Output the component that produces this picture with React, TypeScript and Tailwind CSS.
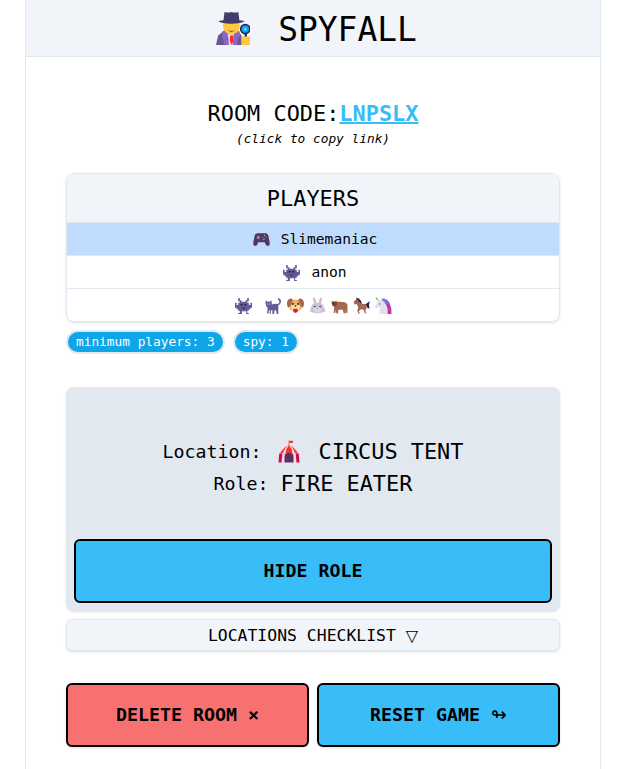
const mono = "font-['DejaVu_Sans_Mono',monospace]";

function SpyIcon({ className }: { className?: string }) {
  return (
    <svg viewBox="0 0 32 32" className={className}>
      <path d="M0 32l2-9 6-5 6 3 6-3 4 5v9z" fill="#635994" />
      <path d="M6 19l3-1 4 6-3 1 2 7H8l-2-8z" fill="#8d65c5" />
      <path d="M19 18l3 1 1 5-2 1-1 7h-4l1-8z" fill="#8d65c5" />
      <path d="M11 21h6l-1 11h-4z" fill="#e1d8ec" />
      <path d="M13.300 23h3l.4 5-1.900 4-1.900-4z" fill="#f8312f" />
      <circle cx="14.500" cy="14" r="8" fill="#ffc83d" />
      <path d="M11 18q3.500 1.500 7 0l-3.500 2z" fill="#bb1d80" />
      <path d="M2 9.500q12-3 25 0-3 2.500-12.500 2.500T2 9.500z" fill="#433b6b" />
      <path d="M7 9l1-8q3 1 6.500 0 3.500 1 6.500 0l1 8q-7.500 1.500-15 0z" fill="#433b6b" />
      <path d="M27 21h2v5h-2z" fill="#321b41" />
      <path d="M24.500 24h7.500v8h-7.500z" fill="#ffc83d" />
      <circle cx="27.500" cy="17" r="5" fill="#321b41" />
      <circle cx="27.500" cy="17" r="3.600" fill="#00a6ed" />
      <circle cx="27.500" cy="17" r="1.500" fill="#83cbff" />
    </svg>
  );
}

function ControllerIcon({ className }: { className?: string }) {
  return (
    <svg viewBox="0 0 32 32" className={className}>
      <path d="M8 4h16q4 0 5 5l2.500 13q.8 6-3.500 6-3 0-4.500-3.500L22 21H10l-1.500 3.500Q7 28 4 28q-4.300 0-3.500-6L3 9q1-5 5-5z" fill="#533566" />
      <circle cx="10" cy="12" r="3" fill="#998ea4" />
      <circle cx="19.500" cy="16" r="1.600" fill="#998ea4" />
      <circle cx="22" cy="8.500" r="1.300" fill="#f9c23c" />
      <circle cx="25.500" cy="12" r="1.300" fill="#f8312f" />
      <circle cx="18.500" cy="12" r="1.300" fill="#00a6ed" />
      <circle cx="22" cy="15" r="1.300" fill="#00d26a" />
    </svg>
  );
}

function InvaderIcon({ className }: { className?: string }) {
  return (
    <svg viewBox="0 0 32 32" className={className}>
      <path
        d="M6 2h3v4h3v3h8V6h3V2h3v6h-3v3h3v4h3v-4h3v9h-3v3h-3v3h-3v4h3v2h-5v-5h-8v5H6v-2h3v-4H6v-3H3v-3H0v-9h3v4h3v-4h3V8H6z"
        fill="#635994"
      />
      <path d="M11 13h3v3h-3zM18 13h3v3h-3z" fill="#1c1633" />
      <path d="M14 20h4v2h-4z" fill="#321b41" />
    </svg>
  );
}

function CatIcon({ className }: { className?: string }) {
  return (
    <svg viewBox="0 0 32 32" className={className}>
      <path d="M1 6l3 3h5l3-3 1 8q5-2 11-1 4-1 3-5-1-3-3-4l1-2q6 2 5 8-1 4-5 6v16h-3l-1-7h-3l-1 7h-3v-7h-3v7H9v-7H7v6H4l1-11q-4-3-4-8z" fill="#635994" />
      <circle cx="5" cy="13" r="1" fill="#fff" />
      <circle cx="9" cy="13" r="1" fill="#fff" />
    </svg>
  );
}

function DogIcon({ className }: { className?: string }) {
  return (
    <svg viewBox="0 0 32 32" className={className}>
      <path d="M5 8q11-7 22 0v15q-11 9-22 0z" fill="#f3ad61" />
      <path d="M8 3Q1 3 0 11q0 8 3 9 4-2 5-8 3-3 3-7z" fill="#a56953" />
      <path d="M24 3q7 0 8 8 0 8-3 9-4-2-5-8-3-3-3-7z" fill="#a56953" />
      <circle cx="11" cy="13" r="1.800" fill="#1c1c1c" />
      <circle cx="21" cy="13" r="1.800" fill="#1c1c1c" />
      <ellipse cx="16" cy="20" rx="8" ry="6" fill="#ffdea7" />
      <path d="M13.500 15.500h5L16 19z" fill="#321b41" />
      <path d="M12 22h8v5q-4 6-8 0z" fill="#e1163c" />
    </svg>
  );
}

function RabbitIcon({ className }: { className?: string }) {
  return (
    <svg viewBox="0 0 32 32" className={className}>
      <path d="M10 15L7 3q0-3 3-2 3 1 4 13zM22 15l3-12q0-3-3-2-3 1-4 13z" fill="#c9c3d0" />
      <path d="M11 12L9.500 4l2.500 8zM21 12l1.500-8L20 12z" fill="#f4a6b8" />
      <path d="M6 14q10-6 20 0l5 13q-15 7-30 0z" fill="#c9c3d0" />
      <ellipse cx="16" cy="24" rx="7" ry="5" fill="#dcd6e2" />
      <circle cx="11" cy="18" r="1.500" fill="#321b41" />
      <circle cx="21" cy="18" r="1.500" fill="#321b41" />
      <path d="M14.500 21h3L16 23z" fill="#f8312f" />
    </svg>
  );
}

function OxIcon({ className }: { className?: string }) {
  return (
    <svg viewBox="0 0 32 32" className={className}>
      <path d="M0 6q4 3 9 1l2-2-1 5H1z" fill="#f9c23c" />
      <path d="M2 9h8q13-1 18 2 4 2 3 8v11h-3v-6l-1 7h-3l-2-7h-8l-1 7H10l-1-7-1 6H5l1-12q-5 0-4-9z" fill="#a56953" />
      <path d="M1 9h10v6q-2 3-7 2-3-3-3-8z" fill="#7d4533" />
      <circle cx="5" cy="12" r="1" fill="#1c1c1c" />
    </svg>
  );
}

function HorseIcon({ className }: { className?: string }) {
  return (
    <svg viewBox="0 0 32 32" className={className}>
      <path d="M1 10l6-7 2 3 6 6q4 2 9 1l2 8-3 4 2 6-3-1-2-6-5-1-4 4 2 5-3-1-2-6 2-5-3-7-4 1z" fill="#a56953" />
      <path d="M5 1q6 1 10 6l2 6-4-2-4-5z" fill="#321b41" />
      <path d="M24 13l8-5-2 6 1 8-4-2-2-4z" fill="#321b41" />
      <circle cx="6" cy="8" r=".9" fill="#1c1c1c" />
    </svg>
  );
}

function UnicornIcon({ className }: { className?: string }) {
  return (
    <svg viewBox="0 0 32 32" className={className}>
      <path d="M1 0l8 7-3 3z" fill="#f9c23c" />
      <path d="M1 0l4 3.500L3 5z" fill="#00d26a" />
      <path d="M0 18l5-10q5-4 10-2l9 9 1 17H8l2-12-3-1-3 2q-4 0-4-3z" fill="#e6dff2" />
      <path d="M12 3q11-1 16 9 4 9 3 20h-7q1-11-3-17-4-6-9-12z" fill="#8d65c5" />
      <path d="M19 8q6 3 9 11 2 6 2 13h-6q1-11-2-16z" fill="#f70a8d" opacity=".7" />
      <path d="M14 6q6 2 9 8" stroke="#5092ff" strokeWidth="2.500" fill="none" />
      <circle cx="9" cy="13" r="1.100" fill="#1c1c1c" />
    </svg>
  );
}

function TentIcon({ className }: { className?: string }) {
  return (
    <svg viewBox="0 0 32 32" className={className}>
      <path d="M16 1v7" stroke="#d3883e" strokeWidth="1.500" />
      <path d="M16.500 1H22l-1.500 1.500L22 4h-5.500z" fill="#f8312f" />
      <path d="M16 7q8 3 12 11H4Q8 10 16 7z" fill="#f8312f" />
      <path d="M16 7q-6 3-8 11h3q1-7 5-11zM16 7q6 3 8 11h-3q-1-7-5-11z" fill="#ffdfe8" />
      <path d="M4 18h24l2 11q0 1-1 1H3q-1 0-1-1z" fill="#ffd7e0" />
      <path d="M3 18h4l-1 12H2zM25 18h4l1 12h-4z" fill="#ca0b4a" />
      <path d="M10 30V22q0-5 6-5t6 5v8z" fill="#533566" />
    </svg>
  );
}

function PlayerRow({ icon, name, className }: { icon: React.ReactNode; name: string; className?: string }) {
  return (
    <div className={`flex h-[33px] items-center justify-center border-t border-[#e2e8f0] pl-[4px] text-[14.6px] ${className ?? ''}`}>
      {icon}
      <span className="ml-[11px]">{name}</span>
    </div>
  );
}

export default function App() {
  return (
    <div className={`ml-[25px] min-h-[769px] w-[576px] border-x border-[#e2e8f0] bg-white text-black ${mono}`}>
      {/* 타이틀 */}
      <header className="flex h-[57px] items-center justify-center border-b border-[#e2e8f0] bg-[#f1f5f9] pl-[7px]">
        <SpyIcon className="mr-[28px] h-[36px] w-[34px]" />
        <h1 className="pt-[3px] text-[32.9px] font-light">SPYFALL</h1>
      </header>

      <main className="px-[40px] pt-[43px]">
        <div className="text-center">
          <div className="text-[21.9px] leading-[28px]">
            ROOM CODE:<a className="font-bold text-[#38bdf8] underline decoration-2">LNPSLX</a>
          </div>
          <div className="text-[12.8px] italic leading-[21px]">(click to copy link)</div>
        </div>

        {/* players */}
        <section className="mt-[24px] overflow-hidden rounded-lg border border-[#e2e8f0] shadow-sm">
          <div className="flex h-[48px] items-center justify-center bg-[#f1f5f9] pt-[2px] text-[21.9px]">PLAYERS</div>
          <PlayerRow
            className="bg-[#bfdbfe]"
            icon={<ControllerIcon className="h-[17px] w-[17px]" />}
            name="Slimemaniac"
          />
          <PlayerRow icon={<InvaderIcon className="h-[17px] w-[17px]" />} name="anon" />
          <div className="flex h-[33px] items-center justify-center border-t border-[#e2e8f0]">
            <InvaderIcon className="mr-[13px] h-[17px] w-[17px]" />
            <div className="flex gap-[5px]">
              <CatIcon className="h-[17px] w-[17px]" />
              <DogIcon className="h-[17px] w-[17px]" />
              <RabbitIcon className="h-[17px] w-[17px]" />
              <OxIcon className="h-[17px] w-[17px]" />
              <HorseIcon className="h-[17px] w-[17px]" />
              <UnicornIcon className="h-[17px] w-[17px]" />
            </div>
          </div>
        </section>

        <div className="mt-[8px] flex gap-[8px] text-[12.8px] text-white">
          <span className="rounded-full border-2 border-[#e2e8f0] bg-[#0ea5e9] px-[8px] leading-[20px]">minimum players: 3</span>
          <span className="rounded-full border-2 border-[#e2e8f0] bg-[#0ea5e9] px-[8px] leading-[20px]">spy: 1</span>
        </div>

        {/* role */}
        <section className="mt-[33px] rounded-lg bg-[#e2e8f0] p-[8px] shadow-sm">
          <div className="flex h-[144px] flex-col items-center justify-center pt-[2px]">
            <div className="flex h-[32px] items-center">
              <span className="text-[18.27px]">Location:</span>
              <TentIcon className="ml-[15px] mr-[18px] h-[26px] w-[24px]" />
              <span className="text-[21.9px]">CIRCUS TENT</span>
            </div>
            <div className="flex h-[32px] items-center">
              <span className="text-[18.27px]">Role:</span>
              <span className="ml-[12px] text-[21.9px]">FIRE EATER</span>
            </div>
          </div>
          <button className="h-[64px] w-full rounded-md border-2 border-black bg-[#38bdf8] text-[18.27px] font-bold">HIDE ROLE</button>
        </section>

        <button className="mt-[8px] h-[32px] w-full rounded-md border border-[#e2e8f0] bg-[#f1f5f9] pt-[3px] text-[16.45px] shadow-sm">
          LOCATIONS CHECKLIST <span className="font-['DejaVu_Sans',sans-serif] text-[16px] leading-none">▽</span>
        </button>

        <div className="mt-[32px] grid grid-cols-2 gap-[8px]">
          <button className="h-[64px] rounded-md border-2 border-black bg-[#f87171] text-[18.27px] font-bold shadow-sm">DELETE ROOM ×</button>
          <button className="h-[64px] rounded-md border-2 border-black bg-[#38bdf8] text-[18.27px] font-bold shadow-sm">
            RESET GAME <span className="font-['DejaVu_Sans',sans-serif] text-[19px] font-normal leading-none">↬</span>
          </button>
        </div>
      </main>
    </div>
  );
}
